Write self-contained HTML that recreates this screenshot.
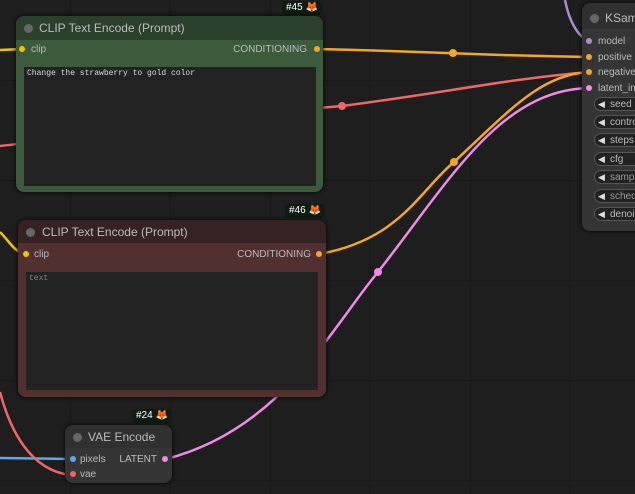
<!DOCTYPE html>
<html><head><style>
body{margin:0;width:635px;height:494px;overflow:hidden;background:#1e1e1e;font-family:"Liberation Sans",sans-serif;position:relative}
.grid{position:absolute;inset:0;background-image:linear-gradient(#191919 1px,transparent 1px),linear-gradient(90deg,#191919 1px,transparent 1px);background-size:100px 100px;background-position:-30px -20px}
.n{position:absolute;border-radius:8px;overflow:hidden;box-shadow:0 0 4px #000}
.t{position:absolute;left:0;right:0;top:0;font-size:12px;color:#bbb}
.t .d{position:absolute;width:9px;height:9px;border-radius:50%;background:#666}
.lb{position:absolute;font-size:10px;color:#bbb}
.s{position:absolute;width:6px;height:6px;border-radius:50%}
.ta{position:absolute;background:#222;font-family:"Liberation Mono",monospace;font-size:8px;color:#ddd;padding:2px 3px;box-sizing:border-box}
.b{position:absolute;background:#0f1c12;color:#fff;font-size:10px;border-radius:4px;padding:1px 4px;height:12px;line-height:12px}
.w{position:absolute;left:594px;width:60px;height:14px;border-radius:7px;background:#222;border:1px solid #555;font-size:10px;color:#bbb;line-height:13px;padding-left:15px;box-sizing:border-box}
.w:before{content:"◀";position:absolute;left:3px;font-size:9px;color:#ddd}
</style></head><body>
<div class="grid"></div>
<svg width="635" height="494" style="position:absolute;left:0;top:0" fill="none" stroke-width="2.5">
<path d="M565,0 C570,25 580,38 589,41" stroke="#a58fd0"/>
<path d="M0,50 L22,49" stroke="#f5c400"/>
<path d="M0,232 C10,242 14,252 26,254" stroke="#f5c400"/>
<path d="M316,49 C450,52 460,55 589,57" stroke="#f5a623"/>
<path d="M0,146 C100,135 200,118 342,106 C450,92 500,80 589,72" stroke="#f06565"/>
<path d="M319,254 C400,240 420,190 454,162 C510,110 540,75 589,72" stroke="#f5a623"/>
<path d="M166,459 C280,430 330,330 378,272 C450,180 500,90 589,88" stroke="#f08ae8"/>
<path d="M0,458 L73,459" stroke="#5aa9f0"/>
<path d="M0,392 C10,430 30,470 70,475" stroke="#f06565"/>
<circle cx="453" cy="53" r="4" fill="#f5a623" stroke="none"/>
<circle cx="342" cy="106" r="4" fill="#f06565" stroke="none"/>
<circle cx="454" cy="162" r="4" fill="#f5a623" stroke="none"/>
<circle cx="378" cy="272" r="4" fill="#f08ae8" stroke="none"/>
</svg>

<div class="b" style="left:282px;top:1px">#45 🦊</div>
<div class="n" style="left:16px;top:16px;width:307px;height:176px;background:#3c5a3c">
 <div class="t" style="height:24px;background:#2b402c"><span class="d" style="left:8px;top:8px"></span><span style="position:absolute;left:23px;top:5px">CLIP Text Encode (Prompt)</span></div>
 <span class="s" style="left:3px;top:30px;background:#f5c400"></span><span class="lb" style="left:15px;top:28px">clip</span>
 <span class="lb" style="right:16px;top:28px">CONDITIONING</span><span class="s" style="right:3px;top:30px;background:#f5a623"></span>
 <div class="ta" style="left:8px;top:51px;width:292px;height:119px">Change the strawberry to gold color</div>
</div>

<div class="b" style="left:285px;top:204px">#46 🦊</div>
<div class="n" style="left:18px;top:220px;width:308px;height:177px;background:#533030">
 <div class="t" style="height:23px;background:#352323"><span class="d" style="left:8px;top:8px"></span><span style="position:absolute;left:24px;top:5px">CLIP Text Encode (Prompt)</span></div>
 <span class="s" style="left:5px;top:31px;background:#f5c400"></span><span class="lb" style="left:16px;top:29px">clip</span>
 <span class="lb" style="right:15px;top:29px">CONDITIONING</span><span class="s" style="right:4px;top:31px;background:#f5a623"></span>
 <div class="ta" style="left:8px;top:52px;width:292px;height:118px;color:#888">text</div>
</div>

<div class="b" style="left:132px;top:409px">#24 🦊</div>
<div class="n" style="left:65px;top:425px;width:107px;height:58px;background:#353535">
 <div class="t" style="height:23px;background:#303030"><span class="d" style="left:8px;top:8px"></span><span style="position:absolute;left:23px;top:5px">VAE Encode</span></div>
 <span class="s" style="left:5px;top:31px;background:#5aa9f0"></span><span class="lb" style="left:15px;top:29px">pixels</span>
 <span class="lb" style="right:15px;top:29px">LATENT</span><span class="s" style="right:4px;top:31px;background:#f08ae8"></span>
 <span class="s" style="left:5px;top:46px;background:#f06565"></span><span class="lb" style="left:15px;top:44px">vae</span>
</div>

<div class="n" style="left:582px;top:3px;width:70px;height:228px;background:#353535">
 <div class="t" style="height:26px;background:#303030"><span class="d" style="left:8px;top:11px"></span><span style="position:absolute;left:23px;top:8px">KSampler</span></div>
</div>
<span class="s" style="left:586px;top:38px;background:#a58fd0"></span><span class="lb" style="left:598px;top:36px">model</span>
<span class="s" style="left:586px;top:54px;background:#f5a623"></span><span class="lb" style="left:598px;top:52px">positive</span>
<span class="s" style="left:586px;top:69px;background:#f5a623"></span><span class="lb" style="left:598px;top:67px">negative</span>
<span class="s" style="left:586px;top:85px;background:#f08ae8"></span><span class="lb" style="left:598px;top:83px">latent_image</span>
<div class="w" style="top:97px">seed</div>
<div class="w" style="top:115px">control</div>
<div class="w" style="top:133px">steps</div>
<div class="w" style="top:152px">cfg</div>
<div class="w" style="top:170px;color:#999">sampler</div>
<div class="w" style="top:189px;color:#999">scheduler</div>
<div class="w" style="top:207px">denoise</div>
</body></html>
